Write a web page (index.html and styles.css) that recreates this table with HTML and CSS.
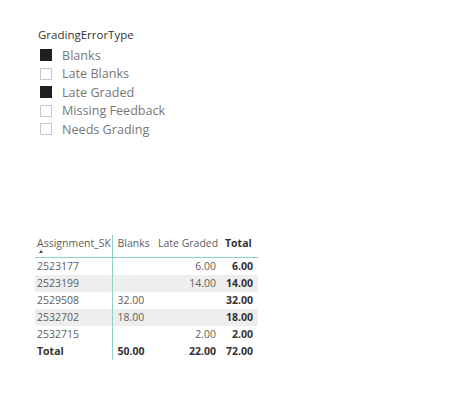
FILE: index.html
```html
<!DOCTYPE html>
<html>
<head>
<meta charset="utf-8">
<link rel="stylesheet" href="styles.css">
</head>
<body>
<div class="slicer">
  <div class="slicer-title">GradingErrorType</div>
  <ul class="slicer-list">
    <li class="item"><span class="box on"></span>Blanks</li>
    <li class="item"><span class="box"></span>Late Blanks</li>
    <li class="item"><span class="box on"></span>Late Graded</li>
    <li class="item"><span class="box"></span>Missing Feedback</li>
    <li class="item"><span class="box"></span>Needs Grading</li>
  </ul>
</div>
<table class="grid">
  <colgroup>
    <col class="w1"><col class="w2"><col class="w3"><col class="w4">
  </colgroup>
  <thead>
    <tr>
      <th class="c1">Assignment_SK<span class="sort"></span></th>
      <th class="c2">Blanks</th>
      <th class="c3">Late Graded</th>
      <th class="c4 b">Total</th>
    </tr>
  </thead>
  <tbody>
    <tr><td class="c1">2523177</td><td class="c2"></td><td class="c3">6.00</td><td class="c4 b">6.00</td></tr>
    <tr class="alt"><td class="c1">2523199</td><td class="c2"></td><td class="c3">14.00</td><td class="c4 b">14.00</td></tr>
    <tr><td class="c1">2529508</td><td class="c2">32.00</td><td class="c3"></td><td class="c4 b">32.00</td></tr>
    <tr class="alt"><td class="c1">2532702</td><td class="c2">18.00</td><td class="c3"></td><td class="c4 b">18.00</td></tr>
    <tr><td class="c1">2532715</td><td class="c2"></td><td class="c3">2.00</td><td class="c4 b">2.00</td></tr>
    <tr class="total"><td class="c1 b">Total</td><td class="c2 b">50.00</td><td class="c3 b">22.00</td><td class="c4 b">72.00</td></tr>
  </tbody>
</table>
</body>
</html>
```
FILE: styles.css
```css
html, body {
  margin: 0;
  padding: 0;
  background: #ffffff;
}
body {
  font-family: "Open Sans", "Noto Sans", sans-serif;
  width: 474px;
  height: 408px;
}
.slicer {
  padding: 27px 0 0 38px;
}
.slicer-title {
  font-size: 11.5px;
  color: #333;
  line-height: 16px;
  margin-bottom: 3px;
}
.slicer-list {
  list-style: none;
  margin: 0;
  padding: 0 0 0 2px;
}
.item {
  display: flex;
  align-items: center;
  height: 18.5px;
  font-size: 12.6px;
  color: #777;
}
.box {
  width: 10px;
  height: 10px;
  border: 1px solid #c8c8c8;
  margin-right: 10px;
  flex: none;
}
.box.on {
  background: #1f1f1f;
  border-color: #1f1f1f;
}
.grid {
  margin: 96px 0 0 35px;
  border-collapse: collapse;
  table-layout: fixed;
  width: 223px;
  font-size: 10.5px;
  color: #606060;
}
.w1 { width: 77px; }
.w2 { width: 43px; }
.w3 { width: 66px; }
.w4 { width: 37px; }
.grid th {
  font-weight: normal;
  height: 22px;
  padding: 0 3px;
  text-align: left;
  vertical-align: top;
  line-height: 17px;
  border-bottom: 1px solid #8fd0c8;
  position: relative;
  white-space: nowrap;
}
.grid td {
  height: 17px;
  padding: 0 3px;
  white-space: nowrap;
  line-height: 17px;
  overflow: visible;
}
.grid .c1 {
  border-right: 1px solid #8fd0c8;
  text-align: left;
  padding-left: 2px;
}
.grid .c2 { text-align: left; padding-left: 5px; }
.grid .c3 { text-align: right; padding-right: 5px; }
.grid .c4 { text-align: right; padding-right: 5px; }
.grid th.c3 { text-align: left; }
.grid th.c4 { text-align: left; padding-left: 4px; }
.grid .b {
  font-weight: bold;
  color: #333;
}
.alt td { background: #eeeeee; }
.sort {
  position: absolute;
  left: 4px;
  top: 15px;
  width: 0;
  height: 0;
  border-left: 2.5px solid transparent;
  border-right: 2.5px solid transparent;
  border-bottom: 3px solid #444;
}
.total td { color: #333; }
```
